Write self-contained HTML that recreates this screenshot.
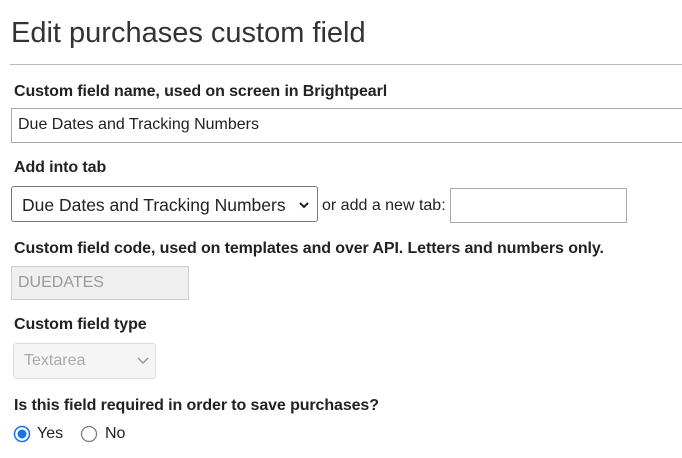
<!DOCTYPE html>
<html><head><style>
body{margin:0;width:682px;height:458px;background:#fff;font-family:"Liberation Sans",Arial,sans-serif;color:#222;position:relative;overflow:hidden}
.a{position:absolute;white-space:nowrap}
.h{left:11px;top:17px;font-size:29px;color:#333}
.hr{position:absolute;left:10px;top:64px;width:672px;height:1px;background:#bbb}
.l{font-weight:bold;font-size:16px;color:#222;letter-spacing:-0.1px}
.box{position:absolute;border:1px solid #999;background:#fff;box-sizing:border-box}
</style></head><body>
<div class="a h">Edit purchases custom field</div>
<div class="hr"></div>
<div class="a l" style="left:14px;top:83px">Custom field name, used on screen in Brightpearl</div>
<div class="box" style="left:11px;top:108px;width:680px;height:35px;border-color:#aaa"></div>
<div class="a" style="left:18px;top:116px;font-size:16px">Due Dates and Tracking Numbers</div>
<div class="a l" style="left:14px;top:159px">Add into tab</div>
<div class="box" style="left:11px;top:186px;width:307px;height:36px;border-color:#777;border-radius:3px"></div>
<div class="a" style="left:22px;top:195px;font-size:17.5px">Due Dates and Tracking Numbers</div>
<svg class="a" style="left:298px;top:200px" width="12" height="10"><path d="M2 3l4 4 4-4" fill="none" stroke="#222" stroke-width="2"/></svg>
<div class="a" style="left:322px;top:197px;font-size:16px">or add a new tab:</div>
<div class="box" style="left:450px;top:188px;width:177px;height:35px;border-color:#aaa"></div>
<div class="a l" style="left:14px;top:240px">Custom field code, used on templates and over API. Letters and numbers only.</div>
<div class="box" style="left:11px;top:266px;width:178px;height:34px;background:#efefef;border-color:#ccc"></div>
<div class="a" style="left:18px;top:274px;font-size:16px;color:#999">DUEDATES</div>
<div class="a l" style="left:14px;top:316px">Custom field type</div>
<div class="box" style="left:13px;top:343px;width:143px;height:36px;background:#f5f5f5;border-color:#ddd;border-radius:3px"></div>
<div class="a" style="left:24px;top:352px;font-size:16px;color:#aaa">Textarea</div>
<svg class="a" style="left:137px;top:357px" width="12" height="8"><path d="M1 1l5 5 5-5" fill="none" stroke="#999" stroke-width="1.5"/></svg>
<div class="a l" style="left:14px;top:397px">Is this field required in order to save purchases?</div>
<svg class="a" style="left:13px;top:425px" width="18" height="18"><circle cx="9" cy="9" r="7.5" fill="#fff" stroke="#1a73e8" stroke-width="1.5"/><circle cx="9" cy="9" r="4.5" fill="#1a73e8"/></svg>
<div class="a" style="left:37px;top:425px;font-size:16px">Yes</div>
<svg class="a" style="left:80px;top:425px" width="18" height="18"><circle cx="9" cy="9" r="7.5" fill="#fff" stroke="#777" stroke-width="1.2"/></svg>
<div class="a" style="left:105px;top:425px;font-size:16px">No</div>
</body></html>
